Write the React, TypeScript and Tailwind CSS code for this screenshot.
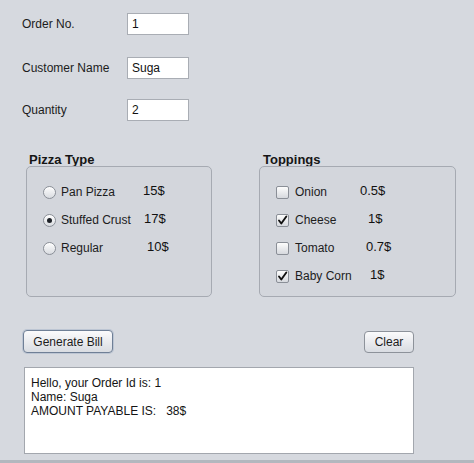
import React from "react";

const font = { fontFamily: '"Liberation Sans", Arial, sans-serif' };

function Field({ label, value, className }: { label: string; value: string; className: string }) {
  return (
    <div className={`flex items-center h-[22px] ${className}`}>
      <div className="w-[127px] pl-[22px] text-[12px] text-[#1c1c1c] whitespace-nowrap">{label}</div>
      <div className="w-[62px] h-[22px] bg-white border border-[#a9adb4] flex items-center pl-[4px] text-[12px] text-[#111]">
        {value}
      </div>
    </div>
  );
}

function Radio({ checked }: { checked?: boolean }) {
  return (
    <div className="w-[13px] h-[13px] rounded-full border border-[#8a8f97] bg-gradient-to-b from-[#fdfdfd] to-[#d9dce1] flex items-center justify-center shadow-[inset_0_1px_1px_rgba(255,255,255,0.8)]">
      {checked && <div className="w-[5px] h-[5px] rounded-full bg-[#1e2228]" />}
    </div>
  );
}

function Check({ checked }: { checked?: boolean }) {
  return (
    <div className="w-[13px] h-[13px] rounded-[2px] border border-[#8a8f97] bg-gradient-to-b from-[#fdfdfd] to-[#d6d9de] flex items-center justify-center">
      {checked && (
        <svg width="11" height="11" viewBox="0 0 11 11">
          <path d="M2 5.5 L4.3 8.5 L9.3 1.5" fill="none" stroke="#111" strokeWidth="1.9" strokeLinecap="round" strokeLinejoin="round" />
        </svg>
      )}
    </div>
  );
}

const pizzas = [
  { name: "Pan Pizza", price: "15$", w: "w-[82px]", checked: false },
  { name: "Stuffed Crust", price: "17$", w: "w-[83px]", checked: true },
  { name: "Regular", price: "10$", w: "w-[86px]", checked: false },
];

const toppings = [
  { name: "Onion", price: "0.5$", w: "w-[65px]", checked: false },
  { name: "Cheese", price: "1$", w: "w-[73px]", checked: true },
  { name: "Tomato", price: "0.7$", w: "w-[71px]", checked: false },
  { name: "Baby Corn", price: "1$", w: "w-[75px]", checked: true },
];

export default function App() {
  return (
    <div className="w-[474px] h-[463px] bg-[#d6d9df] flex flex-col overflow-hidden" style={font}>
      <div className="flex flex-col pt-[13px]">
        <Field label="Order No." value="1" className="" />
        <Field label="Customer Name" value="Suga" className="mt-[22px]" />
        <Field label="Quantity" value="2" className="mt-[20px]" />
      </div>

      <div className="flex mt-[31px]">
        <div className="ml-[26px] flex flex-col">
          <div className="pl-[3px] text-[13px] font-bold leading-[15px] text-[#151515]">Pizza Type</div>
          <div className="mt-[-1px] w-[186px] h-[131px] border border-[#a6aab2] rounded-[5px] bg-[#d3d6dc] flex flex-col pt-[11px] pl-[16px]">
            {pizzas.map((p) => (
              <div key={p.name} className="flex items-center h-[28px] text-[12px] text-[#1c1c1c]">
                <Radio checked={p.checked} />
                <span className={`ml-[5px] ${p.w}`}>{p.name}</span>
                <span className="text-[13px] -mt-[2px] text-[#111]">{p.price}</span>
              </div>
            ))}
          </div>
        </div>

        <div className="ml-[47px] flex flex-col">
          <div className="pl-[4px] text-[13px] font-bold leading-[15px] text-[#151515]">Toppings</div>
          <div className="mt-[-1px] w-[197px] h-[131px] border border-[#a6aab2] rounded-[5px] bg-[#d3d6dc] flex flex-col pt-[11px] pl-[16px]">
            {toppings.map((t) => (
              <div key={t.name} className="flex items-center h-[28px] text-[12px] text-[#1c1c1c]">
                <Check checked={t.checked} />
                <span className={`ml-[6px] ${t.w}`}>{t.name}</span>
                <span className="text-[13px] -mt-[3px] text-[#111]">{t.price}</span>
              </div>
            ))}
          </div>
        </div>
      </div>

      <div className="flex items-start mt-[33px] pl-[23px]">
        <button className="w-[90px] h-[23px] rounded-[4px] border border-[#6f7f96] bg-gradient-to-b from-[#fbfbfc] to-[#d9dce2] text-[12px] text-[#1c1c1c] shadow-[0_0_0_1px_rgba(140,160,190,0.35)]">
          Generate Bill
        </button>
        <button className="ml-[251px] mt-[1px] w-[50px] h-[22px] rounded-[4px] border border-[#8d929a] bg-gradient-to-b from-[#fbfbfc] to-[#d9dce2] text-[12px] text-[#1c1c1c]">
          Clear
        </button>
      </div>

      <div className="ml-[24px] mt-[14px] w-[390px] h-[87px] bg-white border border-[#a3a7ae] pt-[8px] pl-[6px] text-[12px] leading-[14px] text-[#141414] whitespace-pre">
        <div>Hello, your Order Id is: 1</div>
        <div>Name: Suga</div>
        <div>AMOUNT PAYABLE IS:   38$</div>
      </div>

      <div className="mt-auto h-[3px] shrink-0 bg-[#b3b7be]" />
    </div>
  );
}
